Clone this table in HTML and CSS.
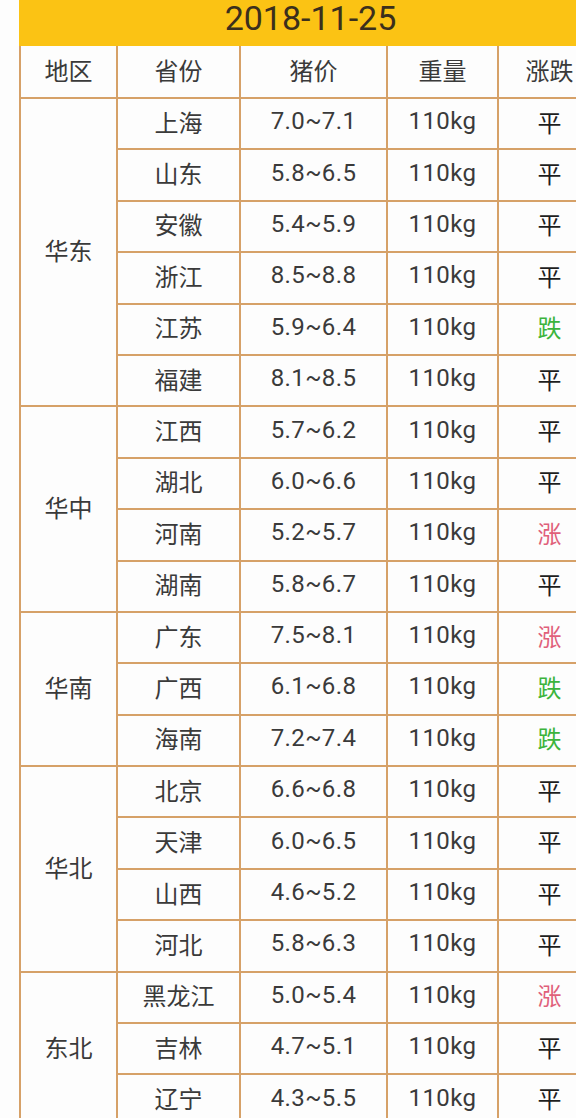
FILE: index.html
```html
<!DOCTYPE html>
<html lang="zh-CN">
<head>
<meta charset="utf-8">
<title>猪价 2018-11-25</title>
<link rel="stylesheet" href="styles.css">
</head>
<body>
<div class="sheet">
  <div class="title">2018-11-25</div>
  <div class="grid">
    <div class="cell">地区</div>
    <div class="cell">省份</div>
    <div class="cell">猪价</div>
    <div class="cell">重量</div>
    <div class="cell">涨跌</div>

    <div class="cell region r6">华东</div>
    <div class="cell">上海</div><div class="cell num">7.0~7.1</div><div class="cell num">110kg</div><div class="cell flat">平</div>
    <div class="cell">山东</div><div class="cell num">5.8~6.5</div><div class="cell num">110kg</div><div class="cell flat">平</div>
    <div class="cell">安徽</div><div class="cell num">5.4~5.9</div><div class="cell num">110kg</div><div class="cell flat">平</div>
    <div class="cell">浙江</div><div class="cell num">8.5~8.8</div><div class="cell num">110kg</div><div class="cell flat">平</div>
    <div class="cell">江苏</div><div class="cell num">5.9~6.4</div><div class="cell num">110kg</div><div class="cell down">跌</div>
    <div class="cell">福建</div><div class="cell num">8.1~8.5</div><div class="cell num">110kg</div><div class="cell flat">平</div>

    <div class="cell region r4">华中</div>
    <div class="cell">江西</div><div class="cell num">5.7~6.2</div><div class="cell num">110kg</div><div class="cell flat">平</div>
    <div class="cell">湖北</div><div class="cell num">6.0~6.6</div><div class="cell num">110kg</div><div class="cell flat">平</div>
    <div class="cell">河南</div><div class="cell num">5.2~5.7</div><div class="cell num">110kg</div><div class="cell up">涨</div>
    <div class="cell">湖南</div><div class="cell num">5.8~6.7</div><div class="cell num">110kg</div><div class="cell flat">平</div>

    <div class="cell region r3">华南</div>
    <div class="cell">广东</div><div class="cell num">7.5~8.1</div><div class="cell num">110kg</div><div class="cell up">涨</div>
    <div class="cell">广西</div><div class="cell num">6.1~6.8</div><div class="cell num">110kg</div><div class="cell down">跌</div>
    <div class="cell">海南</div><div class="cell num">7.2~7.4</div><div class="cell num">110kg</div><div class="cell down">跌</div>

    <div class="cell region r4">华北</div>
    <div class="cell">北京</div><div class="cell num">6.6~6.8</div><div class="cell num">110kg</div><div class="cell flat">平</div>
    <div class="cell">天津</div><div class="cell num">6.0~6.5</div><div class="cell num">110kg</div><div class="cell flat">平</div>
    <div class="cell">山西</div><div class="cell num">4.6~5.2</div><div class="cell num">110kg</div><div class="cell flat">平</div>
    <div class="cell">河北</div><div class="cell num">5.8~6.3</div><div class="cell num">110kg</div><div class="cell flat">平</div>

    <div class="cell region r3">东北</div>
    <div class="cell">黑龙江</div><div class="cell num">5.0~5.4</div><div class="cell num">110kg</div><div class="cell up">涨</div>
    <div class="cell">吉林</div><div class="cell num">4.7~5.1</div><div class="cell num">110kg</div><div class="cell flat">平</div>
    <div class="cell">辽宁</div><div class="cell num">4.3~5.5</div><div class="cell num">110kg</div><div class="cell flat">平</div>
  </div>
</div>
</body>
</html>
```
FILE: styles.css
```css
html, body {
  margin: 0;
  padding: 0;
  overflow: hidden;
  background: #fdfdfd;
}
body {
  width: 576px;
  height: 1118px;
  font-family: Roboto, "Noto Sans CJK SC", sans-serif;
  color: #3a3a3a;
}
.sheet {
  margin-left: 19px;
  width: 581px;
}
.title {
  height: 46px;
  background: #fbc314;
  color: #3b2f1c;
  font-size: 34px;
  line-height: 36px;
  text-align: center;
  padding-left: 2px;
  box-sizing: border-box;
}
.grid {
  display: grid;
  grid-template-columns: 95px 121px 145px 109px 101px;
  grid-template-rows: 51px repeat(21, 49.4px);
  column-gap: 2px;
  row-gap: 2px;
  padding-left: 2px;
  background: #d6a168;
}
.cell {
  background: #fdfdfd;
  display: flex;
  align-items: center;
  justify-content: center;
  font-size: 24px;
  white-space: nowrap;
  padding-bottom: 5px;
  box-sizing: border-box;
}
.num {
  font-size: 24px;
  letter-spacing: 0.4px;
}
.region { grid-column: 1; }
.r6 { grid-row: span 6; }
.r4 { grid-row: span 4; }
.r3 { grid-row: span 3; }
.flat { color: #1e1e1e; }
.up { color: #e0607a; }
.down { color: #3cb43c; }
```
